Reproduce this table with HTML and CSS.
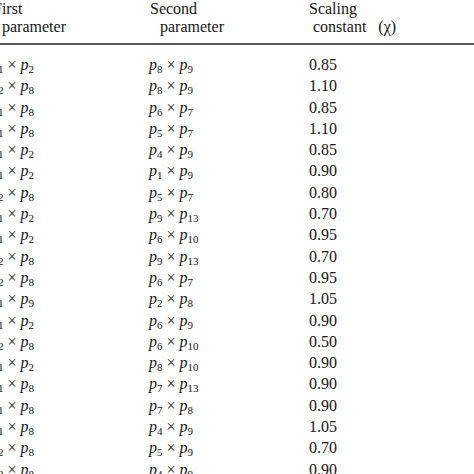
FILE: index.html
```html
<!DOCTYPE html>
<html>
<head>
<meta charset="utf-8">
<link rel="stylesheet" href="styles.css">
</head>
<body>
<div class="table">
  <div class="head">
    <div class="hcell c1"><div>First</div><div class="l2">parameter</div></div>
    <div class="hcell c2"><div>Second</div><div class="l2">parameter</div></div>
    <div class="hcell c3"><div>Scaling</div><div class="l2">constant&nbsp;&nbsp; (χ)</div></div>
  </div>
  <div class="rule"></div>
  <div class="body">
    <div class="row"><span><i>p</i><sub>1</sub> × <i>p</i><sub>2</sub></span><span><i>p</i><sub>8</sub> × <i>p</i><sub>9</sub></span><span>0.85</span></div>
    <div class="row"><span><i>p</i><sub>2</sub> × <i>p</i><sub>8</sub></span><span><i>p</i><sub>8</sub> × <i>p</i><sub>9</sub></span><span>1.10</span></div>
    <div class="row"><span><i>p</i><sub>1</sub> × <i>p</i><sub>8</sub></span><span><i>p</i><sub>6</sub> × <i>p</i><sub>7</sub></span><span>0.85</span></div>
    <div class="row"><span><i>p</i><sub>1</sub> × <i>p</i><sub>8</sub></span><span><i>p</i><sub>5</sub> × <i>p</i><sub>7</sub></span><span>1.10</span></div>
    <div class="row"><span><i>p</i><sub>1</sub> × <i>p</i><sub>2</sub></span><span><i>p</i><sub>4</sub> × <i>p</i><sub>9</sub></span><span>0.85</span></div>
    <div class="row"><span><i>p</i><sub>1</sub> × <i>p</i><sub>2</sub></span><span><i>p</i><sub>1</sub> × <i>p</i><sub>9</sub></span><span>0.90</span></div>
    <div class="row"><span><i>p</i><sub>2</sub> × <i>p</i><sub>8</sub></span><span><i>p</i><sub>5</sub> × <i>p</i><sub>7</sub></span><span>0.80</span></div>
    <div class="row"><span><i>p</i><sub>1</sub> × <i>p</i><sub>2</sub></span><span><i>p</i><sub>9</sub> × <i>p</i><sub>13</sub></span><span>0.70</span></div>
    <div class="row"><span><i>p</i><sub>1</sub> × <i>p</i><sub>2</sub></span><span><i>p</i><sub>6</sub> × <i>p</i><sub>10</sub></span><span>0.95</span></div>
    <div class="row"><span><i>p</i><sub>2</sub> × <i>p</i><sub>8</sub></span><span><i>p</i><sub>9</sub> × <i>p</i><sub>13</sub></span><span>0.70</span></div>
    <div class="row"><span><i>p</i><sub>2</sub> × <i>p</i><sub>8</sub></span><span><i>p</i><sub>6</sub> × <i>p</i><sub>7</sub></span><span>0.95</span></div>
    <div class="row"><span><i>p</i><sub>1</sub> × <i>p</i><sub>9</sub></span><span><i>p</i><sub>2</sub> × <i>p</i><sub>8</sub></span><span>1.05</span></div>
    <div class="row"><span><i>p</i><sub>1</sub> × <i>p</i><sub>2</sub></span><span><i>p</i><sub>6</sub> × <i>p</i><sub>9</sub></span><span>0.90</span></div>
    <div class="row"><span><i>p</i><sub>2</sub> × <i>p</i><sub>8</sub></span><span><i>p</i><sub>6</sub> × <i>p</i><sub>10</sub></span><span>0.50</span></div>
    <div class="row"><span><i>p</i><sub>1</sub> × <i>p</i><sub>2</sub></span><span><i>p</i><sub>8</sub> × <i>p</i><sub>10</sub></span><span>0.90</span></div>
    <div class="row"><span><i>p</i><sub>1</sub> × <i>p</i><sub>8</sub></span><span><i>p</i><sub>7</sub> × <i>p</i><sub>13</sub></span><span>0.90</span></div>
    <div class="row"><span><i>p</i><sub>1</sub> × <i>p</i><sub>8</sub></span><span><i>p</i><sub>7</sub> × <i>p</i><sub>8</sub></span><span>0.90</span></div>
    <div class="row"><span><i>p</i><sub>1</sub> × <i>p</i><sub>8</sub></span><span><i>p</i><sub>4</sub> × <i>p</i><sub>9</sub></span><span>1.05</span></div>
    <div class="row"><span><i>p</i><sub>2</sub> × <i>p</i><sub>8</sub></span><span><i>p</i><sub>5</sub> × <i>p</i><sub>9</sub></span><span>0.70</span></div>
    <div class="row"><span><i>p</i><sub>2</sub> × <i>p</i><sub>8</sub></span><span><i>p</i><sub>4</sub> × <i>p</i><sub>9</sub></span><span>0.90</span></div>
  </div>
</div>
</body>
</html>
```
FILE: styles.css
```css
html, body {
  margin: 0;
  padding: 0;
  background: #fff;
  overflow: hidden;
}
body {
  width: 474px;
  height: 474px;
}
.table {
  margin-left: -10px;
  font-family: "Liberation Serif", "Times New Roman", serif;
  font-size: 16px;
  color: #161616;
}
.head {
  display: grid;
  grid-template-columns: 159px 160px 1fr;
  line-height: 18px;
}
.hcell.c1 { padding-left: 3px; }
.hcell.c1 .l2 { padding-left: 9px; }
.hcell.c2 { padding-left: 1px; }
.hcell.c2 .l2 { padding-left: 10px; }
.hcell.c3 .l2 { padding-left: 4px; }
.rule {
  height: 2px;
  background: #5a5a5a;
  margin-top: 7px;
  width: 500px;
}
.body {
  padding-top: 9px;
}
.row {
  display: grid;
  grid-template-columns: 159px 160px 1fr;
  height: 21.3px;
  line-height: 21.3px;
  white-space: nowrap;
}
.row i {
  font-style: italic;
}
.row sub {
  font-size: 11px;
  line-height: 0;
  vertical-align: -3px;
}
```
